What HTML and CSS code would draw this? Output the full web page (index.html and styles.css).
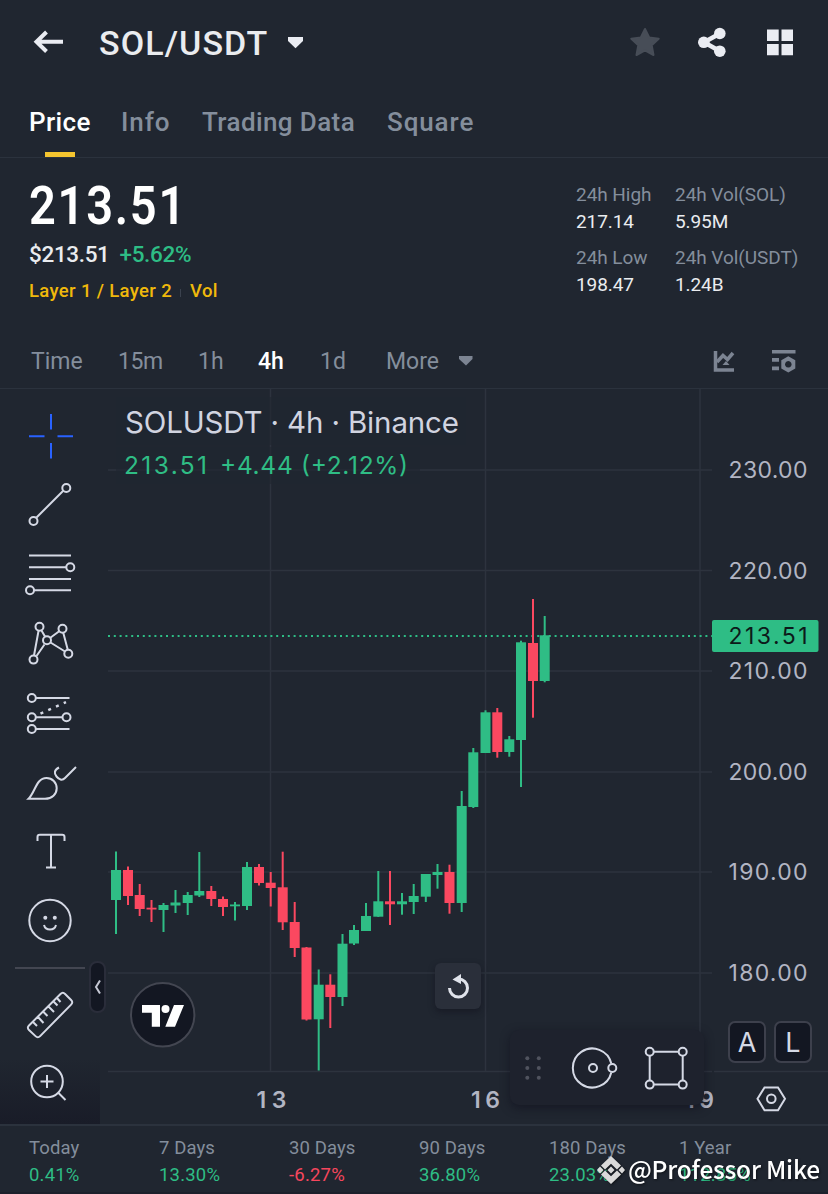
FILE: index.html
```html
<!DOCTYPE html>
<html lang="en">
<head>
    <meta charset="UTF-8">
    <meta name="viewport" content="width=device-width, initial-scale=1.0">
    <title>SOL/USDT</title>
    <link rel="stylesheet" href="styles.css">
</head>
<body>
    <header class="header">
        <svg class="back" width="32" height="26" viewBox="32 30 32 26"><path d="M63 41.7H37M46.5 32L36.5 41.7L46.5 51.5" /></svg>
        <h1>SOL/USDT</h1>
        <svg class="caret" width="18" height="14" viewBox="286 35 18 14"><path d="M288 36h15v4l-7.500 7.200L288 40z" /></svg>
        <div class="header-actions">
            <svg width="32" height="32" viewBox="629 27 32 32"><path class="star" d="M645 29l4.200 8.500 9.500 1.200-7 6.600 1.800 9.700-8.500-4.600-8.500 4.600 1.800-9.700-7-6.600 9.500-1.200z" /></svg>
            <svg width="32" height="32" viewBox="697 27 32 32"><path class="share-line" d="M720 33.500L704 42.300L720 51.200" /><circle cx="719.800" cy="33.500" r="5.800" /><circle cx="703.800" cy="42.300" r="5.800" /><circle cx="719.800" cy="51.200" r="5.800" /></svg>
            <svg width="32" height="32" viewBox="764 27 32 32"><path d="M767 29.500h11.700v11.500H767zM781.500 29.500H793V41h-11.500zM767 44h11.700v11.300H767zM781.500 44H793v11.300h-11.500z" /></svg>
        </div>
    </header>

    <nav class="tabs">
        <span class="tab active">Price</span>
        <span class="tab info">Info</span>
        <span class="tab">Trading Data</span>
        <span class="tab square">Square</span>
    </nav>

    <section class="summary">
        <div class="quote">
            <div class="last-price">213.51</div>
            <div class="fiat"><span>$213.51</span><span class="up">+5.62%</span></div>
            <div class="tags"><span>Layer 1 / Layer 2</span><i></i><span>Vol</span></div>
        </div>
        <div class="stats">
            <div class="stat"><label>24h High</label><span>217.14</span></div>
            <div class="stat"><label>24h Vol(SOL)</label><span>5.95M</span></div>
            <div class="stat"><label>24h Low</label><span>198.47</span></div>
            <div class="stat"><label>24h Vol(USDT)</label><span>1.24B</span></div>
        </div>
    </section>

    <nav class="intervals">
        <span>Time</span>
        <span class="minutes">15m</span>
        <span>1h</span>
        <span class="active">4h</span>
        <span>1d</span>
        <span>More</span>
        <svg width="14" height="10" viewBox="0 0 14 10"><path d="M0 0h13.500v3L7 9.500 0 3z" /></svg>
        <svg class="indicator" width="24" height="24" viewBox="713 348 24 24"><path class="thick" d="M715.500 350v19h18.500" /><path class="zig" d="M717 361l6-6.500 4.500 4 5.500-6.500" /><path d="M722.500 364l3.500-4 3.500 4z" /></svg>
        <svg width="26" height="26" viewBox="771 348 26 26"><path fill-rule="evenodd" d="M772 350h23.500v3.500H772zM772 358h7v3.800h-7zM772 366.500h7v3.800h-7zM788.300 356.200l7 4v8.200l-7 4-7-4v-8.200zM788.300 361a3.300 3.300 0 1 0 .01 0z" /></svg>
    </nav>

    <main class="chart">
        <!-- Drawing tools -->
        <aside class="tools">
            <svg class="cross" viewBox="0 401 100 69"><path d="M51 414v15.500M51 443v15.500M29 436.300h15.500M57.500 436.300H73" /></svg>
            <svg viewBox="0 470 100 69"><path d="M36.500 517.500l26.500-26.500" /><circle cx="33.500" cy="521" r="4" /><circle cx="66.300" cy="488" r="4" /></svg>
            <svg viewBox="0 539 100 69"><path d="M29 555.500h42M29 567.200h37M29 579h42M34 590.300h37" /><circle cx="70.300" cy="567.200" r="4" /><circle cx="30" cy="590.300" r="4" /></svg>
            <svg viewBox="0 608 100 69"><path d="M38.500 631l-4.500 24.500M41.500 630.500l3.500 6M36.500 656l8-11.500M50 638l9.500-7M50.500 642.500l14.500 9M63.200 632.500l4.500 17" /><circle cx="39.500" cy="626.700" r="4" /><circle cx="62.500" cy="628.700" r="4" /><circle cx="47" cy="640.300" r="4" /><circle cx="33.500" cy="659.600" r="4" /><circle cx="68.300" cy="653.700" r="4" /></svg>
            <svg viewBox="0 677 100 69"><path d="M36 698h33.500M36 717.300h26M36 729h33.500" /><path class="dotted" d="M40.500 713.700l25.500-11.500" /><circle cx="31.800" cy="698" r="4" /><circle cx="31.800" cy="717.300" r="4" /><circle cx="66.500" cy="717.300" r="4" /><circle cx="31.800" cy="729" r="4" /></svg>
            <svg viewBox="0 746 100 70"><path d="M28.500 798.800C35.500 792 36 778 46.500 778c5.800 0 10.200 4.500 10.200 10.300S52 798.800 45 798.800zM59 767.500c-5 2.500-5 6-2.500 9s5.500 4.500 8.500 1.500L76 767" /></svg>
            <svg viewBox="0 816 100 69"><path d="M37.500 841v-4c0-1.500.8-2.300 2.300-2.300h22.400c1.500 0 2.300.8 2.300 2.300v4M51 834.700V867.500M46 867.500h10" /></svg>
            <svg viewBox="0 885 100 70"><circle cx="50" cy="920.500" r="20.700" /><path d="M44 925c1.500 6 10.500 6 12 0" /><circle class="dot" cx="45.300" cy="917.700" r="2" /><circle class="dot" cx="54.800" cy="917.700" r="2" /></svg>
            <hr>
            <svg viewBox="0 980 100 69"><path d="M29 1025.500l31.500-31.500q2.300-2.300 4.600 0l6 6q2.300 2.300 0 4.600l-31 31.500q-2.300 2.300-4.600 0l-6.500-6q-2.300-2.300 0-4.600zM33 1022l4 4M38 1017l5.500 6M43.500 1012l4 4M48.500 1006.500l5.500 5.500M53.500 1001.500l4 4M57 998l3.500 4" /></svg>
            <svg viewBox="0 1049 100 69"><circle cx="47" cy="1081.500" r="15.800" /><path d="M47 1075v13M40.500 1081.500h13M58 1092.500l7.500 7.500" /></svg>
        </aside>

        <!-- Price chart -->
        <svg class="plot" viewBox="100 389 728 735">
            <g class="grid">
                <path d="M270.500 389V1071M485.500 389V1071M700 389V1071" />
                <path d="M108 470H712M108 570.500H712M108 671H712M108 772H712M108 872H712M108 973H712" />
                <path d="M108 1071.500H712M714 1071.500H828" />
            </g>
            <path class="legend-bg" d="M116 397H466V445H116zM116 447H420V484H116z" />
            <path class="price-line" d="M108 636H712" />
            <g id="candles"></g>

            <g class="legend">
                <text class="symbol" x="125" y="433" textLength="334">SOLUSDT · 4h · Binance</text>
                <text class="change" x="124" y="474" textLength="83">213.51</text>
                <text class="change" x="220" y="474" textLength="188">+4.44 (+2.12%)</text>
            </g>
            <g class="axis">
                <text x="728.500" y="478" textLength="79">230.00</text>
                <text x="728.500" y="579" textLength="79">220.00</text>
                <text x="728.500" y="679" textLength="79">210.00</text>
                <text x="728.500" y="780" textLength="79">200.00</text>
                <text x="728.500" y="880" textLength="79">190.00</text>
                <text x="728.500" y="980.500" textLength="79">180.00</text>
            </g>
            <rect class="price-tag" x="712" y="620" width="106.500" height="32" rx="2" />
            <text class="price-tag-text" x="728.500" y="644" textLength="79">213.51</text>
            <g class="axis dates">
                <text x="256.500" y="1107.500" textLength="30">13</text>
                <text x="471" y="1107.500" textLength="29">16</text>
                <text x="685" y="1107.500" textLength="29">19</text>
            </g>
            <path class="settings" d="M764.500 1087.500h13.500l7 11.300-7 11.500h-13.500l-7-11.500z" />
            <circle class="settings" cx="771.300" cy="1098.800" r="4.300" />

            <circle class="tv-badge" cx="162.700" cy="1014.800" r="31.700" />
            <path class="tv-mark" d="M142 1005h18v21.700h-8.200v-13.900H142zM174 1005h10l-9 21.700h-9.700z" />
            <circle class="tv-mark" cx="165.500" cy="1009" r="4" />
        </svg>

        <!-- Controls floating over the chart -->
        <button class="collapse"><svg width="8" height="16" viewBox="0 0 8 16"><path d="M6 1.500L2 8l4 6.500" /></svg></button>
        <button class="reset"><svg width="26" height="28" viewBox="445 972 26 28"><path d="M449.500 988a9 9 0 1 0 9-9" /><path class="head" d="M452.500 979.500l8.500-5.500v10z" /></svg></button>
        <div class="scale-buttons">
            <button>A</button>
            <button>L</button>
        </div>
        <div class="favorites">
            <svg width="194" height="75" viewBox="509.500 1030 194 75">
                <g class="handle"><circle cx="526.800" cy="1058.300" r="2" /><circle cx="538.300" cy="1058.300" r="2" /><circle cx="526.800" cy="1068" r="2" /><circle cx="538.300" cy="1068" r="2" /><circle cx="526.800" cy="1077.800" r="2" /><circle cx="538.300" cy="1077.800" r="2" /></g>
                <path d="M610.800 1063.500a19.500 19.500 0 1 0 0 9M653.500 1051.800h24M653.500 1084.600h24M649.200 1056v24.500M682.200 1056v24.500" />
                <circle cx="592.500" cy="1068" r="4" /><circle cx="611.800" cy="1068" r="4" />
                <circle cx="649.200" cy="1051.800" r="4" /><circle cx="682.200" cy="1051.800" r="4" /><circle cx="649.200" cy="1084.600" r="4" /><circle cx="682.200" cy="1084.600" r="4" />
            </svg>
        </div>
    </main>

    <footer class="performance">
        <div><label>Today</label><span class="up">0.41%</span></div>
        <div><label>7 Days</label><span class="up">13.30%</span></div>
        <div><label>30 Days</label><span class="down">-6.27%</span></div>
        <div><label>90 Days</label><span class="up">36.80%</span></div>
        <div><label>180 Days</label><span class="up">23.03%</span></div>
        <div><label>1 Year</label><span class="up">112.85%</span></div>
        <svg class="author" width="232" height="40" viewBox="596 1150 232 40">
            <path d="M611 1156l10 9.500-4 4-6-5.800-6 5.800-4-4zM611 1184l10-9.500-4-4-6 5.800-6-5.800-4 4zM611 1166.500l3.500 3.500-3.500 3.500-3.500-3.500zM600 1166.500l3.500 3.500-3.500 3.500-3-3.500zM622 1166.500l3 3.500-3 3.500-3.500-3.500z" />
            <text x="628" y="1179" textLength="192">@Professor Mike</text>
        </svg>
    </footer>

    <script src="chart.js"></script>
</body>
</html>
```

FILE: styles.css
```css
:root {
    --bg: #202630;
    --line: #2b323d;
    --text: #eaecef;
    --muted: #848e9c;
    --up: #2ebd85;
    --down: #f6465d;
    --yellow: #f0b90b;
}

* {
    box-sizing: border-box;
}

body {
    width: 828px;
    height: 1194px;
    margin: 0;
    overflow: hidden;
    background-color: var(--bg);
    color: var(--text);
    font-family: Roboto, sans-serif;
}

svg {
    display: block;
}

.up {
    color: var(--up);
}

.down {
    color: var(--down);
}

.header {
    display: flex;
    align-items: center;
    height: 86px;
    padding: 0 32px;
}

.header svg {
    fill: #eaecf2;
}

.header .back {
    fill: none;
    stroke: #eaecf2;
    stroke-width: 4;
}

h1 {
    width: 186px;
    margin: 0 0 0 35px;
    font-size: 34px;
    font-weight: 500;
    letter-spacing: 1.1px;
    line-height: 40px;
}

.header .caret {
    margin-left: 1px;
}

.header-actions {
    display: flex;
    gap: 35.5px;
    margin-left: auto;
}

.header .star {
    fill: #474d57;
    stroke: #474d57;
    stroke-width: 2;
    stroke-linejoin: round;
}

.share-line {
    fill: none;
    stroke: #eaecf2;
    stroke-width: 4.500;
}

.tabs {
    display: grid;
    grid-template-columns: 92px 81px 185px auto;
    height: 72px;
    padding: 19px 0 0 29px;
    border-bottom: 1px solid var(--line);
    color: var(--muted);
    font-size: 26px;
    font-weight: 500;
    line-height: 34px;
}

.tab {
    position: relative;
    width: max-content;
    letter-spacing: 0.4px;
}

.tab.info,
.tab.square {
    letter-spacing: 0.9px;
}

.tab.active {
    color: #fff;
}

.tab.active::after {
    content: '';
    position: absolute;
    left: 16px;
    bottom: 0;
    width: 30px;
    height: 5px;
    background-color: #f5c52f;
}

.summary {
    display: flex;
    justify-content: space-between;
    height: 174px;
    padding: 16px 29px 0 29px;
}

.last-price {
    height: 64px;
    color: #fff;
    font-size: 54px;
    font-weight: 600;
    letter-spacing: 2px;
    line-height: 64px;
    transform: scaleX(0.87);
    transform-origin: left;
}

.fiat {
    display: flex;
    gap: 10px;
    height: 34px;
    font-size: 22.5px;
    font-weight: 500;
    letter-spacing: -0.35px;
    line-height: 33px;
}

.tags {
    display: flex;
    align-items: center;
    height: 38px;
    color: var(--yellow);
    font-size: 18.500px;
    font-weight: 500;
    letter-spacing: 0.35px;
}

.tags i {
    width: 1px;
    height: 8px;
    margin: 4px 9px 0 8px;
    background-color: #3b424e;
}

.stats {
    display: grid;
    grid-template-columns: 99px 124px;
    grid-auto-rows: 63px;
    padding-top: 7px;
}

.stat label,
.stat span {
    display: block;
    height: 27px;
    font-size: 19px;
    line-height: 27px;
    white-space: nowrap;
}

.stat span {
    letter-spacing: -0.1px;
}

.stat label {
    color: var(--muted);
    letter-spacing: -0.05px;
}

.intervals {
    display: grid;
    grid-template-columns: 87px 80px 60px 62px 66px 73px 254px 58px 26px;
    align-items: center;
    height: 57px;
    padding: 2px 0 0 31px;
    border-bottom: 1px solid var(--line);
    color: var(--muted);
    font-size: 23px;
}

.intervals svg {
    fill: #7c8492;
}

.intervals .minutes {
    letter-spacing: -0.4px;
}

.intervals .active {
    color: #fff;
    font-weight: 500;
}

.intervals .thick,
.intervals .zig {
    fill: none;
    stroke: #7c8492;
    stroke-width: 3.500;
}

.chart {
    position: relative;
    display: flex;
    height: 735px;
}

.tools {
    width: 100px;
    height: 735px;
    padding-top: 12px;
    background: linear-gradient(rgba(24, 26, 38, 0) 670px, #191c28 735px);
}

.tools svg {
    width: 100px;
    fill: none;
    stroke: #d5d9e5;
    stroke-width: 2;
}

.tools .cross {
    stroke: #2962ff;
}

.tools .dotted {
    stroke-dasharray: 3 5.500;
    stroke-width: 2.500;
}

.tools .dot {
    fill: #d5d9e5;
    stroke: none;
}

.tools hr {
    width: 70px;
    height: 2px;
    margin: 12px 0 11px 15px;
    border: none;
    background-color: #434651;
}

.plot {
    width: 728px;
    height: 735px;
    font-family: Inter, sans-serif;
}

.grid {
    fill: none;
    stroke: #2d333e;
    stroke-width: 1.500;
}

.legend-bg {
    fill: var(--bg);
    opacity: 0.6;
}

.price-line {
    stroke: var(--up);
    stroke-width: 2;
    stroke-dasharray: 2 3.800;
}

.candle-up {
    fill: #2fbd85;
}

.candle-down {
    fill: #fb4860;
}

.symbol {
    fill: #d1d4e0;
    font-size: 29.500px;
}

.change {
    fill: #2fbd85;
    font-size: 24.500px;
}

.axis {
    fill: #b2b5c3;
    font-size: 23px;
}

.dates {
    font-weight: 600;
}

.price-tag {
    fill: #2ebd85;
}

.price-tag-text {
    fill: #0c1a1a;
    font-size: 23px;
}

.settings {
    fill: none;
    stroke: #d5d9e5;
    stroke-width: 2;
}

.tv-badge {
    fill: #131722;
    stroke: #434651;
    stroke-width: 2;
}

.tv-mark {
    fill: #fff;
}

.chart button {
    display: flex;
    align-items: center;
    justify-content: center;
    padding: 0;
    font-family: Inter, sans-serif;
}

.chart .collapse {
    position: absolute;
    left: 89px;
    top: 572px;
    width: 17px;
    height: 52px;
    border: 2px solid #2a2d3a;
    border-radius: 8px;
    background-color: #131722;
}

.collapse path {
    fill: none;
    stroke: #c5c8d4;
    stroke-width: 2;
}

.chart .reset {
    position: absolute;
    left: 435px;
    top: 574px;
    width: 46px;
    height: 46px;
    border: none;
    border-radius: 6px;
    background-color: #2a2f3a;
    box-shadow: 0 3px 6px rgba(15, 15, 28, 0.5);
}

.reset path {
    fill: none;
    stroke: #e0e3eb;
    stroke-width: 3;
}

.reset .head {
    fill: #e0e3eb;
    stroke: none;
}

.scale-buttons {
    position: absolute;
    left: 728px;
    top: 632px;
    display: flex;
    gap: 8px;
}

.scale-buttons button {
    width: 38px;
    height: 42px;
    border: 2px solid #3d404c;
    border-radius: 7px;
    background-color: #131722;
    color: #d5d9e5;
    font-size: 27px;
}

.favorites {
    position: absolute;
    left: 510px;
    top: 641px;
    border-radius: 9px;
    background-color: #1e222d;
    box-shadow: 0 3px 10px rgba(15, 15, 28, 0.6);
}

.favorites svg {
    fill: none;
    stroke: #d5d9e5;
    stroke-width: 2;
}

.favorites .handle {
    fill: #50535e;
    stroke: none;
}

.performance {
    position: relative;
    display: grid;
    grid-template-columns: repeat(6, 130px);
    height: 70px;
    padding: 9px 0 0 29px;
    border-top: 2px solid var(--line);
    border-bottom: 2px solid #1c202b;
    font-size: 18.500px;
    line-height: 27px;
}

.performance label,
.performance span {
    display: block;
}

.performance span {
    letter-spacing: 0.2px;
}

.performance label {
    color: var(--muted);
    letter-spacing: 0.1px;
}

.author {
    position: absolute;
    right: 0;
    top: 24px;
    fill: #dadada;
    filter: drop-shadow(1px 1px 1px rgba(0, 0, 0, 0.5));
}

.author text {
    fill: #fff;
    font-family: "Noto Sans CJK SC", sans-serif;
    font-size: 24.500px;
    font-weight: 500;
}
```

FILE: chart.js
```javascript
// [x, high, low, body top, body bottom, rising]
const candles = [
    [116, 851.5, 934, 870, 900, 1],
    [128, 866.5, 905, 870, 896, 0],
    [139.7, 884, 916, 895, 909, 0],
    [151.5, 900, 922, 907.7, 909.5, 0],
    [163.5, 903, 932, 905, 910, 1],
    [175.5, 890, 913, 902.5, 905.5, 1],
    [187.7, 892, 915, 895, 903, 1],
    [199.3, 852, 897, 891, 895.5, 1],
    [211.3, 886, 906, 891, 899, 0],
    [223, 896.5, 916, 899, 907, 0],
    [235, 902, 920.5, 904.5, 906.3, 1],
    [247, 862, 910, 867, 906, 1],
    [259, 864, 885.5, 867, 883, 0],
    [270.7, 872, 906.5, 882.7, 888, 0],
    [282.7, 851.7, 930, 887.3, 922.3, 0],
    [294.7, 902, 957, 922, 948, 0],
    [306.5, 947, 1020.5, 947.5, 1019.5, 0],
    [318.7, 969.5, 1070.5, 984.7, 1019.3, 1],
    [330.3, 974.3, 1028, 984.7, 997, 0],
    [342.5, 934, 1006, 943.7, 997, 1],
    [354, 925, 945, 930, 943.5, 1],
    [366, 903, 931, 916, 931, 1],
    [378.3, 871, 917, 901.3, 916.7, 1],
    [390, 871, 925, 901.3, 904.3, 0],
    [402, 893, 914.7, 901.3, 904.3, 1],
    [413.7, 884, 914, 896, 902, 1],
    [425.8, 874, 902, 874, 896.7, 1],
    [437.5, 864, 888.7, 872, 875, 1],
    [449.5, 864.7, 913.7, 872, 903, 0],
    [461.7, 791, 912, 806, 903, 1],
    [473.3, 748, 808, 752.3, 807, 1],
    [485.5, 710.3, 753, 712.3, 753, 1],
    [497.3, 708, 757.7, 712.3, 752, 0],
    [509.3, 736, 756.7, 739.3, 752, 1],
    [521, 640.7, 787, 642.3, 740, 1],
    [533, 599, 717.7, 643, 681, 0],
    [544.7, 616, 682.3, 635.3, 681, 1]
];

document.getElementById('candles').innerHTML = candles.map(([x, high, low, top, bottom, rising]) => `
    <g class="${rising ? 'candle-up' : 'candle-down'}">
        <rect x="${x - 1}" y="${high}" width="2" height="${low - high}" />
        <rect x="${x - 5}" y="${top}" width="10" height="${bottom - top}" />
    </g>`).join('');
```
